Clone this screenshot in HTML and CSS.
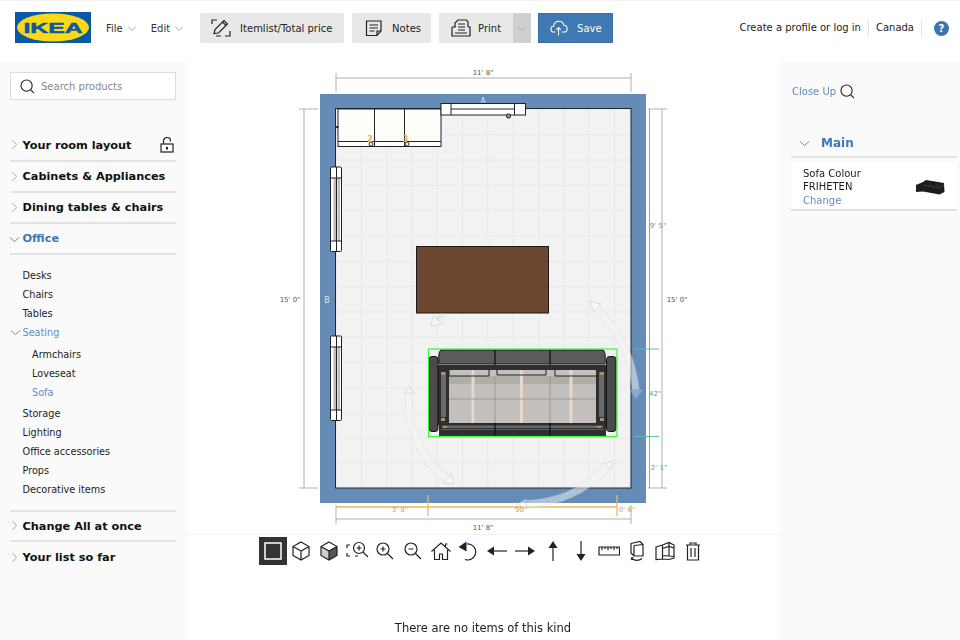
FILE: index.html
```html
<!DOCTYPE html>
<html lang="en">
<head>
<meta charset="utf-8">
<title>IKEA Planner</title>
<link rel="stylesheet" href="styles.css">
</head>
<body>
<header class="topbar">
  <svg class="logo" viewBox="0 0 76 31" width="76" height="31">
    <rect width="76" height="31" fill="#0b58a4"/>
    <ellipse cx="38" cy="15.5" rx="36" ry="14" fill="#fbd914"/>
    <text class="logo-text" x="38" y="20.5" text-anchor="middle" textLength="59" lengthAdjust="spacingAndGlyphs">IKEA</text>
  </svg>
  <nav class="menus">
    <span class="menu">File <svg class="chev" viewBox="0 0 8 5" width="8" height="5"><path d="M0 .5l4 4 4-4"/></svg></span>
    <span class="menu">Edit <svg class="chev" viewBox="0 0 8 5" width="8" height="5"><path d="M0 .5l4 4 4-4"/></svg></span>
  </nav>
  <button class="btn btn-items">
    <svg class="ico" viewBox="0 0 20 20" width="20" height="20"><path d="M6 2H1v4M1 9v0M14 18h5v-5M5 18h5"/><path d="M3 15.500l1-4L13 2.500l3.500 3.500L7.500 15z"/><path d="M11.500 4l3.500 3.500"/></svg>
    <span>Itemlist/Total price</span>
  </button>
  <button class="btn btn-notes">
    <svg class="ico" viewBox="0 0 18 18" width="18" height="18"><path d="M1.500 2h14.500v10l-4 4.500H1.500z"/><path d="M4.500 6h8.500M4.500 9h8.500M4.500 12h5M12 16.500V12h4"/></svg>
    <span>Notes</span>
  </button>
  <div class="print">
    <button class="btn btn-print">
      <svg class="ico" viewBox="0 0 20 18" width="20" height="18"><path d="M4 8V4l3-3h8.500l1.500 2v5"/><path d="M1 8h3v-1M17 8h2v9H1V8"/><path d="M7 5h7M7 8h7M7 11h7M4 14h12"/></svg>
      <span>Print</span>
    </button>
    <span class="print-more"><svg class="chev" viewBox="0 0 8 5" width="8" height="5"><path d="M0 .5l4 4 4-4"/></svg></span>
  </div>
  <button class="btn btn-save">
    <svg class="ico ico-save" viewBox="0 0 20 17" width="18" height="16"><path d="M6 13H4.500C2 13 1 11 1 9.500 1 7.500 2.500 6.500 4 6.500 4.500 3 7 1 10 1s5 2 5.500 4.500C18 5.500 19 7.500 19 9.500S17.500 13 15.500 13H13"/><path d="M9.500 16.500V8M7 10.500l2.500-2.500 2.500 2.500"/></svg>
    <span>Save</span>
  </button>
  <div class="account">
    <span class="acc-link">Create a profile or log in</span>
    <span class="acc-link acc-country">Canada</span>
    <span class="help">?</span>
  </div>
</header>

<main class="workspace">
  <aside class="catalog">
    <div class="search">
      <svg class="search-ico" viewBox="0 0 16 16" width="15" height="15"><circle cx="7" cy="7" r="6"/><path d="M11.500 11.500L15 15"/></svg>
      <span class="placeholder">Search products</span>
    </div>
    <ul class="cats">
      <li class="cat cat-first">
        <svg class="arrow" viewBox="0 0 5 9" width="5" height="9"><path d="M.5 0l4 4.500-4 4.500"/></svg>
        <span>Your room layout</span>
        <svg class="lock" viewBox="0 0 14 16" width="14" height="16"><path d="M3.500 7V4a3.500 3.500 0 0 1 7 0v.5"/><rect x="1" y="7" width="12" height="8"/><rect x="6" y="10" width="2" height="2.500" class="lock-dot"/></svg>
      </li>
      <li class="cat">
        <svg class="arrow" viewBox="0 0 5 9" width="5" height="9"><path d="M.5 0l4 4.500-4 4.500"/></svg>
        <span>Cabinets &amp; Appliances</span>
      </li>
      <li class="cat">
        <svg class="arrow" viewBox="0 0 5 9" width="5" height="9"><path d="M.5 0l4 4.500-4 4.500"/></svg>
        <span>Dining tables &amp; chairs</span>
      </li>
      <li class="cat cat-open">
        <svg class="arrow arrow-down" viewBox="0 0 9 5" width="9" height="5"><path d="M0 .5l4.500 4 4.500-4"/></svg>
        <span>Office</span>
      </li>
    </ul>
    <ul class="subs">
      <li>Desks</li>
      <li>Chairs</li>
      <li>Tables</li>
      <li class="sub-open">
        <svg class="arrow arrow-down" viewBox="0 0 9 5" width="9" height="5"><path d="M0 .5l4.500 4 4.500-4"/></svg>
        Seating
      </li>
    </ul>
    <ul class="subsubs">
      <li>Armchairs</li>
      <li>Loveseat</li>
      <li class="active">Sofa</li>
    </ul>
    <ul class="subs subs-rest">
      <li>Storage</li>
      <li>Lighting</li>
      <li>Office accessories</li>
      <li>Props</li>
      <li>Decorative items</li>
    </ul>
    <ul class="cats cats-end">
      <li class="cat">
        <svg class="arrow" viewBox="0 0 5 9" width="5" height="9"><path d="M.5 0l4 4.500-4 4.500"/></svg>
        <span>Change All at once</span>
      </li>
      <li class="cat cat-last">
        <svg class="arrow" viewBox="0 0 5 9" width="5" height="9"><path d="M.5 0l4 4.500-4 4.500"/></svg>
        <span>Your list so far</span>
      </li>
    </ul>
  </aside>

  <section class="stage">
    <svg class="plan" viewBox="187 62 592 472" width="592" height="472">
      <defs>
        <pattern id="grid" x="335.600" y="109" width="25.300" height="25.300" patternUnits="userSpaceOnUse">
          <path d="M0 0H25.300M0 0V25.300" class="grid-line"/>
        </pattern>
      </defs>
      <!-- dimensions -->
      <path class="dim" d="M336 78H631M336 73V92M631 73V92M304 109V488M299 109H318M299 488H318M662 109V488M648 109H667M648 488H667M336 519H631M336 505V524M631 505V524"/>
      <text class="dim-text" x="483" y="75" text-anchor="middle">11' 8"</text>
      <text class="dim-text" x="290" y="302" text-anchor="middle">15' 0"</text>
      <text class="dim-text" x="677" y="302" text-anchor="middle">15' 0"</text>
      <text class="dim-text" x="483" y="530" text-anchor="middle">11' 8"</text>
      <!-- room -->
      <rect x="320" y="94" width="326" height="409" class="wall"/>
      <rect x="336" y="109" width="295" height="379" class="floor"/>
      <rect x="336" y="109" width="295" height="379" fill="url(#grid)"/>
      <rect x="335.500" y="108.500" width="295.500" height="379.500" class="floor-edge"/>
      <text class="wall-label" x="327" y="303" text-anchor="middle">B</text>
      <text class="wall-label" x="483" y="104" text-anchor="middle">A</text>
      <!-- teal and yellow measures -->
      <path class="teal" d="M649.500 109V488M634 349H659M634 436.500H659"/>
      <text class="teal-text" x="658" y="228" text-anchor="middle">9' 5"</text>
      <text class="teal-text" x="655" y="396" text-anchor="middle">42"</text>
      <text class="teal-text" x="659" y="470" text-anchor="middle">2' 1"</text>
      <path class="gold" d="M336 507H617M428 495V516M617 495V516"/>
      <text class="gold-text" x="400" y="512" text-anchor="middle">3' 8"</text>
      <text class="gold-text" x="521" y="512" text-anchor="middle">90"</text>
      <text class="gold-text" x="627" y="512" text-anchor="middle">0' 6"</text>
      <!-- cabinets -->
      <rect x="338" y="109" width="103" height="37.500" class="cabinet"/>
      <path class="line" d="M374.500 109V146.500M404.500 109V146.500M338 141.500H441"/>
      <path class="line-thin" d="M336 127h2.500"/>
      <circle cx="371" cy="144" r="2" class="knob"/>
      <circle cx="407" cy="144" r="2" class="knob"/>
      <text class="cab-num" x="370" y="142" text-anchor="middle">2</text>
      <text class="cab-num" x="405.500" y="142" text-anchor="middle">3</text>
      <!-- windows -->
      <rect x="441" y="103.500" width="84.500" height="11.500" class="window"/>
      <path class="line" d="M451 103.500V115M514.500 103.500V115M451 109H514.500"/>
      <circle cx="508.500" cy="116" r="2.200" class="knob-dark"/>
      <g class="side-window">
        <rect x="330.500" y="167" width="11" height="84.500" rx="1" class="window"/>
        <rect x="333.500" y="178" width="2.500" height="63" class="pane"/>
        <rect x="337.500" y="178" width="2.500" height="63" class="pane"/>
        <path class="line" d="M330.500 178H341.500M330.500 241H341.500M336.500 167V251"/>
      </g>
      <g class="side-window">
        <rect x="330.500" y="336" width="11" height="84.500" rx="1" class="window"/>
        <rect x="333.500" y="347" width="2.500" height="63" class="pane"/>
        <rect x="337.500" y="347" width="2.500" height="63" class="pane"/>
        <path class="line" d="M330.500 347H341.500M330.500 410H341.500M336.500 336V420"/>
      </g>
      <!-- table -->
      <rect x="416.500" y="246.500" width="132" height="66.500" class="table"/>
      <!-- rotate arrows -->
      <g class="rot">
        <path class="rot-edge" d="M597 309Q632 345 636 392"/>
        <path class="rot-fill" d="M597 309Q632 345 636 392"/>
        <path class="rot-head" d="M590 301.500L601 304 594 312Z"/>
        <path class="rot-tip" d="M630 390H642L636 399Z"/>
        <path class="rot-edge" d="M409 393Q406 447 447 479"/>
        <path class="rot-fill" d="M409 393Q406 447 447 479"/>
        <path class="rot-head" d="M404 393L409 386.500 414 393Z"/>
        <path class="rot-head" d="M444 483L454 484 451 474Z"/>
        <path class="rot-edge" d="M607 467Q575 503 524 504"/>
        <path class="rot-fill" d="M607 467Q575 503 524 504"/>
        <path class="rot-head" d="M604 463L613 461 611 470Z"/>
        <path class="rot-head" d="M526 499V509L517 504Z"/>
        <path class="rot-head" d="M431 326L443 324 433 316Z"/>
        <path class="rot-edge rot-short" d="M437 320L444 314"/>
      </g>
      <!-- sofa -->
      <g class="sofa">
        <rect x="449" y="369" width="148" height="54" class="seat"/>
        <rect x="449" y="376" width="148" height="8" class="seat-shade"/>
        <path class="stripe" d="M473 370V423M521.500 370V423M571 370V423"/>
        <path class="seam" d="M495 376V423M550 376V423M449 399H597"/>
        <path class="seat-lip" d="M449 370V376H489V369M497 369V375H546V369M555 369V376H597"/>
        <path class="frame" d="M438 365H606V370H438ZM438 369H449V425H438ZM596 369H606V425H596ZM439 423H606V436H439Z"/>
        <path class="frame-grey" d="M441 372h5v45h-5zM599 372h5v45h-5zM442 425.500H603V428H442Z"/>
        <path class="frame-light" d="M441 429.500H604"/>
        <path class="tan" d="M441 372h4v3h-4zM600 372h4v3h-4zM441 418h4v3h-4zM600 418h4v3h-4zM443 426h4v2h-4zM597 426h4v2h-4z"/>
        <path class="back" d="M441 350H603Q606 351 605 364H439Q438 351 441 350Z"/>
        <path class="back-line" d="M495 350V365M550 350V365"/>
        <rect x="429" y="356.500" width="9" height="75" rx="3" class="arm"/>
        <rect x="606.500" y="356.500" width="9.500" height="75" rx="3" class="arm"/>
        <path class="back-line" d="M495 423V436M550 423V436"/>
        <rect x="428.500" y="349" width="188.500" height="87.500" class="select"/>
      </g>
    </svg>
    <div class="tools">
      <span class="tool tool-on"><svg viewBox="0 0 22 22" width="22" height="22"><rect x="3" y="3" width="16" height="16" class="ic-sq"/></svg></span>
      <span class="tool"><svg viewBox="0 0 22 22" width="22" height="22"><path class="ic" d="M11 2l8 4.500v9L11 20l-8-4.500v-9zM3 6.500l8 4.500 8-4.500M11 11v9"/></svg></span>
      <span class="tool"><svg viewBox="0 0 22 22" width="22" height="22"><path class="ic-shade" d="M3 6.500l8 4.500v9l-8-4.500z"/><path class="ic-shade-r" d="M19 6.500l-8 4.500v9l8-4.500z"/><path class="ic" d="M11 2l8 4.500v9L11 20l-8-4.500v-9zM3 6.500l8 4.500 8-4.500M11 11v9"/></svg></span>
      <span class="tool"><svg viewBox="0 0 24 22" width="24" height="22"><path class="ic" d="M5 5H2v3M2 13v3h3M10 16h3"/><circle class="ic" cx="14" cy="8" r="5.500"/><path class="ic" d="M14 5.500v5M11.500 8h5M18 12l5 5"/></svg></span>
      <span class="tool"><svg viewBox="0 0 22 22" width="22" height="22"><circle class="ic" cx="9" cy="9" r="6"/><path class="ic" d="M9 6.500v5M6.500 9h5M13.500 13.500L19 19"/></svg></span>
      <span class="tool"><svg viewBox="0 0 22 22" width="22" height="22"><circle class="ic" cx="9" cy="9" r="6"/><path class="ic" d="M6.500 9h5M13.500 13.500L19 19"/></svg></span>
      <span class="tool"><svg viewBox="0 0 22 22" width="22" height="22"><path class="ic" d="M1.500 11.500L11 3l9.500 8.500M4.500 10v9.500h5V14h3v5.500h5V10M15.500 7V4h2"/></svg></span>
      <span class="tool"><svg viewBox="0 0 22 22" width="22" height="22"><path class="ic" d="M9 4a8 8 0 1 1-2 15.500"/><path class="ic-fill" d="M.5 7L8.500 1.500v10z"/></svg></span>
      <span class="tool"><svg viewBox="0 0 22 22" width="22" height="22"><path class="ic" d="M6 11h15"/><path class="ic-fill" d="M1 11l7-4.500v9z"/></svg></span>
      <span class="tool"><svg viewBox="0 0 22 22" width="22" height="22"><path class="ic" d="M1 11h15"/><path class="ic-fill" d="M21 11l-7-4.500v9z"/></svg></span>
      <span class="tool"><svg viewBox="0 0 22 22" width="22" height="22"><path class="ic" d="M11 6v15"/><path class="ic-fill" d="M11 1L6.500 8h9z"/></svg></span>
      <span class="tool"><svg viewBox="0 0 22 22" width="22" height="22"><path class="ic" d="M11 1v15"/><path class="ic-fill" d="M11 21l-4.500-7h9z"/></svg></span>
      <span class="tool"><svg viewBox="0 0 22 22" width="22" height="22"><path class="ic" d="M1 7h20.500v8H1zM4 7v3M7 7v2M10 7v3M13 7v2M16 7v3M19 7v2"/></svg></span>
      <span class="tool"><svg viewBox="0 0 22 22" width="22" height="22"><path class="ic" d="M5 3.500L14 1.500l3 3v11.500H8l-3-3zM8 5.500L17 4.500M8 5.500V16M5 18c3 3 8 3 11 .5M5 18l2.500-.5M5 18l1 2"/></svg></span>
      <span class="tool"><svg viewBox="0 0 22 22" width="22" height="22"><path class="ic" d="M2 7l6.500-2v14L2 19.500zM8.500 5L15 2.500 20 5v13l-5 1.500-6.500-.5M15 2.500v4M8.500 8.500L15 6.500 20 8M15 6.500V16M8.500 15.500L15 16l5 .5"/></svg></span>
      <span class="tool"><svg viewBox="0 0 22 22" width="22" height="22"><path class="ic" d="M4 5h14M8 5V3h6v2M5.500 5v15h11V5M9 8v9M13 8v9"/></svg></span>
    </div>
    <p class="notice">There are no items of this kind</p>
  </section>

  <aside class="details">
    <div class="closeup">
      <span>Close Up</span>
      <svg class="search-ico" viewBox="0 0 16 16" width="15" height="15"><circle cx="7" cy="7" r="6"/><path d="M11.500 11.500L15 15"/></svg>
    </div>
    <div class="group-head">
      <svg class="arrow arrow-down" viewBox="0 0 9 5" width="9" height="5"><path d="M0 .5l4.500 4 4.500-4"/></svg>
      <span>Main</span>
    </div>
    <div class="option">
      <div class="option-text">
        <span>Sofa Colour</span>
        <span>FRIHETEN</span>
        <span class="change">Change</span>
      </div>
      <svg class="thumb" viewBox="0 0 30 16" width="30" height="16"><path d="M1 6L8 3 11 1l18 3 .5 9-5 2.500L8 12.500 1 13z" fill="#1c1c1c"/><path d="M9 6l15 3 5-3M15 4l1 4M22 4.500l1 4" stroke="#4a4a4a" stroke-width=".7" fill="none"/></svg>
    </div>
  </aside>
</main>
</body>
</html>
```
FILE: styles.css
```css
* { box-sizing: border-box; }
html, body { margin: 0; height: 100%; }
body {
  width: 960px;
  height: 640px;
  overflow: hidden;
  background: #fff;
  color: #1c1c1c;
  font-family: "DejaVu Sans", Verdana, sans-serif;
  font-size: 10px;
  display: flex;
  flex-direction: column;
}
ul { list-style: none; margin: 0; padding: 0; }
p { margin: 0; }

.topbar {
  height: 62px;
  flex: none;
  display: flex;
  align-items: flex-start;
  padding: 12px 0 0 15px;
  border-top: 1px solid #f2f2f2;
}
.logo { display: block; flex: none; margin-top: -1px; }
.logo-text {
  font-family: "Liberation Sans", Arial, sans-serif;
  font-weight: 700;
  font-size: 15px;
  fill: #0b58a4;
  stroke: #0b58a4;
  stroke-width: .5px;
}
.menus { display: flex; gap: 15px; margin-left: 15px; height: 30px; align-items: center; }
.menu { display: flex; align-items: center; gap: 5px; color: #333; }
.chev { fill: none; stroke: #aaa; stroke-width: 1; display: block; }

.btn {
  border: 0;
  height: 30px;
  padding: 0;
  display: flex;
  align-items: center;
  background: #e8e8e8;
  color: #222;
  font: inherit;
  border-radius: 1px;
}
.ico { fill: none; stroke: #222; stroke-width: 1.2; display: block; flex: none; }
.btn-items { width: 144px; margin-left: 17px; padding-left: 11px; gap: 9px; }
.btn-notes { width: 79px; margin-left: 8px; padding-left: 13px; gap: 9px; }
.print { display: flex; margin-left: 8px; }
.btn-print { width: 74px; padding-left: 12px; gap: 7px; }
.print-more {
  width: 18px;
  height: 30px;
  background: #cfcfcf;
  display: flex;
  align-items: center;
  justify-content: center;
}
.btn-save {
  width: 75px;
  margin-left: 7px;
  padding-left: 12px;
  gap: 9px;
  background: #3f78b2;
  color: #fff;
  box-shadow: inset 0 0 0 1px #3a70a8;
}
.ico-save { stroke: #fff; }
.account { margin-left: auto; display: flex; align-items: center; height: 30px; padding-right: 11px; }
.acc-link { padding-right: 7px; margin-right: 7px; border-right: 1px solid #e2e2e2; line-height: 16px; color: #222; }
.acc-country { margin-right: 12px; }
.help {
  width: 15px;
  height: 15px;
  border-radius: 50%;
  background: #3e74ac;
  color: #fff;
  font-weight: 700;
  font-size: 10px;
  line-height: 15px;
  text-align: center;
}

.workspace { flex: 1; display: flex; min-height: 0; }
.catalog { width: 187px; flex: none; background: #fafafa; padding: 10px 11px 0 10px; }
.search {
  height: 28px;
  background: #fff;
  border: 1px solid #dcdcdc;
  display: flex;
  align-items: center;
  padding-left: 9px;
  gap: 6px;
}
.search-ico { fill: none; stroke: #222; stroke-width: 1.2; display: block; flex: none; }
.placeholder { color: #888; }
.cats { margin-top: 29px; }
.cat {
  height: 31px;
  border-bottom: 2px solid #e2e2e2;
  display: flex;
  align-items: center;
  font-size: 11.300px;
  font-weight: 700;
  color: #111;
  padding-left: 12.500px;
  position: relative;
}
.cat-first { height: 33px; padding-top: 2px; }
.cat .arrow { position: absolute; left: 2px; top: 50%; margin-top: -5px; }
.cat .arrow-down { margin-top: -2px; left: 0; }
.arrow { fill: none; stroke: #aaa; stroke-width: 1; display: block; flex: none; }
.arrow-down { stroke: #5e8fc0; }
.lock { position: absolute; right: 2px; top: 8px; fill: none; stroke: #222; stroke-width: 1.2; }
.lock-dot { fill: #222; stroke: none; }
.cat-open { color: #3f78b2; }
.cat-last { border-bottom: 0; }

.subs { padding-left: 12.500px; margin-top: 11px; font-size: 9.700px; }
.subs li { height: 19px; line-height: 19px; position: relative; }
.sub-open { color: #5e8fc0; }
.sub-open .arrow { position: absolute; left: -12px; top: 7px; }
.subsubs { padding-left: 22px; margin-top: 3px; font-size: 9.700px; }
.subsubs li { height: 19px; line-height: 19px; }
.active { color: #5e8fc0; }
.subs-rest { margin-top: 2px; }
.cats-end { margin-top: 11px; border-top: 2px solid #e2e2e2; }
.cats-end .cat:first-child { height: 30px; }

.stage { width: 592px; flex: none; display: flex; flex-direction: column; background: #fff; }
.plan { display: block; flex: none; }
.tools {
  height: 32px;
  flex: none;
  display: flex;
  justify-content: center;
  align-items: center;
  border-top: 1px solid #f4f4f4;
  padding-top: 1px;
}
.tool { width: 28px; height: 28px; display: flex; align-items: center; justify-content: center; }
.tool-on { background: #333; }
.ic { fill: none; stroke: #222; stroke-width: 1.2; }
.ic-fill { fill: #222; }
.ic-sq { fill: #333; stroke: #fff; stroke-width: 1.500; }
.ic-shade { fill: #cfcfcf; }
.ic-shade-r { fill: #555; }
.notice { margin-top: 55px; text-align: center; font-size: 11.500px; color: #222; }

.details { flex: 1; background: #fafafa; padding: 0 3px 0 12px; }
.closeup { display: flex; align-items: center; gap: 4px; margin-top: 21px; height: 16px; color: #5e8fc0; padding-left: 1px; }
.group-head {
  display: flex;
  align-items: center;
  gap: 12px;
  margin-top: 27px;
  height: 32px;
  padding: 4px 0 0 9px;
  border-bottom: 2px solid #e2e2e2;
  font-size: 12px;
  font-weight: 700;
  color: #3f78b2;
}
.option {
  margin-top: 4px;
  height: 49px;
  background: #fff;
  border-bottom: 2px solid #e2e2e2;
  padding: 3px 0 0 12px;
  display: flex;
  align-items: center;
  justify-content: space-between;
}
.option-text { display: flex; flex-direction: column; line-height: 13.500px; }
.change { color: #5e8fc0; }
.thumb { margin-right: 12px; display: block; }

/* floor plan */
.dim { fill: none; stroke: #b0b0b0; stroke-width: 1; }
.dim-text { font-size: 7px; fill: #555; }
.wall { fill: #648cb6; }
.floor { fill: #f2f2f2; }
.grid-line { fill: none; stroke: #e2e2e2; stroke-width: 1.200; }
.floor-edge { fill: none; stroke: #1d2730; stroke-width: 1; }
.wall-label { font-size: 8px; fill: #dbe6f2; }
.teal { fill: none; stroke: #62bda8; stroke-width: 1; }
.teal-text { font-size: 7px; fill: #4da893; }
.gold { fill: none; stroke: #e5bd5e; stroke-width: 1.300; }
.gold-text { font-size: 7px; fill: #d9a13c; }
.cabinet { fill: #fffefa; stroke: #222; stroke-width: 1; }
.line { fill: none; stroke: #222; stroke-width: 1; }
.line-thin { fill: none; stroke: #333; stroke-width: 2; }
.knob { fill: #eee; stroke: #333; stroke-width: 1; }
.knob-dark { fill: #888; stroke: #333; stroke-width: 1; }
.cab-num { font-size: 8px; font-weight: 700; fill: #f2a93b; }
.window { fill: #fff; stroke: #222; stroke-width: 1; }
.pane { fill: #bdbdbd; }
.table { fill: #6b4731; stroke: #1a1a1a; stroke-width: 1; }

.rot { opacity: .55; }
.rot-edge { fill: none; stroke: #d4d4d4; stroke-width: 8; opacity: .7; }
.rot-short { stroke-width: 4; }
.rot-fill { fill: none; stroke: #fafafa; stroke-width: 6.500; opacity: .8; }
.rot-head { fill: #fafafa; stroke: #c8c8c8; stroke-width: 1; }
.rot-tip { fill: #a9c2dc; stroke: #9db7d2; stroke-width: 1; }

.seat { fill: #c3bfbc; }
.seat-shade { fill: #aaa6a2; opacity: .7; }
.stripe { fill: none; stroke: #e8d8cc; stroke-width: 3; }
.seam { fill: none; stroke: #9a9896; stroke-width: 1; }
.seat-lip { fill: none; stroke: #222; stroke-width: 1; }
.frame { fill: #2e2e2e; }
.frame-grey { fill: #6a6a6a; }
.frame-light { fill: none; stroke: #6a6258; stroke-width: 1; }
.tan { fill: #a98f6d; }
.back { fill: #5b5b5b; stroke: #151515; stroke-width: 1; }
.back-line { fill: none; stroke: #111; stroke-width: 1.300; }
.arm { fill: #4b4b4b; stroke: #111; stroke-width: 1; }
.select { fill: none; stroke: #3df23d; stroke-width: 1.200; }
```
